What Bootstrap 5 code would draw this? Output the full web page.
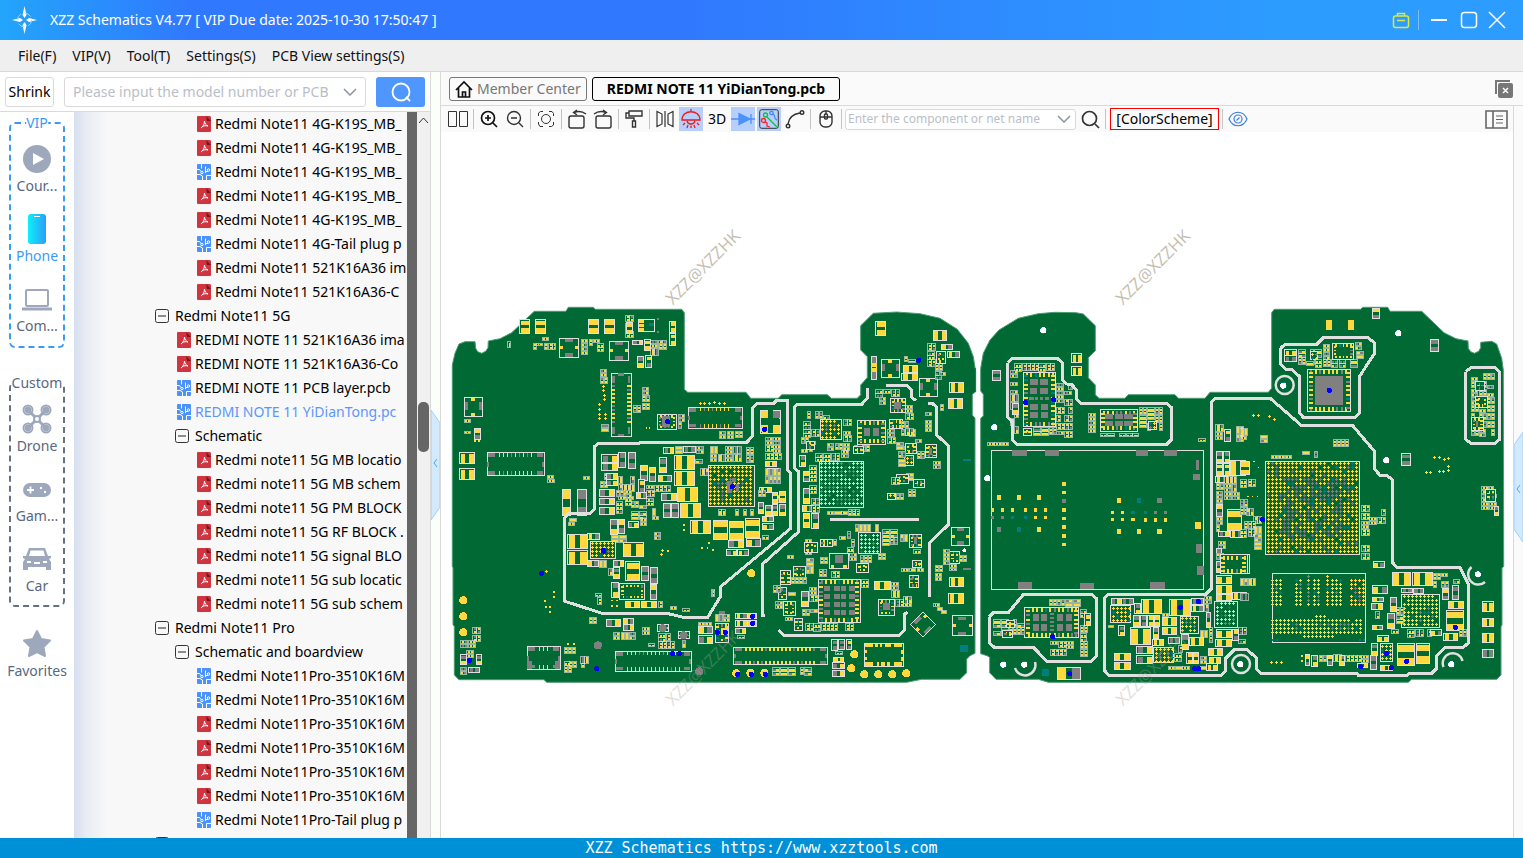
<!DOCTYPE html>
<html lang="en">
<head>
<meta charset="utf-8">
<meta name="viewport" content="width=device-width, initial-scale=1">
<title>XZZ Schematics</title>
<link href="https://cdn.jsdelivr.net/npm/bootstrap@5.3.0/dist/css/bootstrap.min.css" rel="stylesheet">
<style>
body{font-family:"Noto Sans","Open Sans",sans-serif;font-size:14px;line-height:20px;color:#111;background:#fff}
a{color:inherit;text-decoration:none}
svg{flex:none}
svg:not([fill]){fill:none}
svg:not([stroke]){stroke:currentColor}
button{background:none;border:0;padding:0;color:inherit}
.titlebar{height:40px;background:linear-gradient(90deg,#23a5fb 0,#3079fe 190px,#3079fe 45%,#2c9dff 85%,#2c9dff);color:#fff;padding:0 16px 0 12px}
.titlebar .brand-text{margin-left:13px}
.menubar{height:32px;background:#efefef;border-bottom:1px solid #d9d9d9;padding:0 18px;gap:16px}
.side{width:431px;border-right:1px solid #d9d9d9}
.searchrow{height:40px;border-bottom:1px solid #d9d9d9;padding:0 5px;gap:10px}
.btn-shrink{width:49px;height:30px;border:1px solid #d9d9d9;border-radius:3px}
.combo{border:1px solid #d9d9d9;border-radius:3px;background:#fff;min-width:0}
.combo input{border:0;outline:0;background:none;min-width:0;flex:1;padding:0;color:#333}
.combo input::placeholder{color:#b9bec9;opacity:1}
.combo button{color:#8c94a3}
.combo-model{height:30px;padding:0 8px;width:302px}
.btn-find{width:49px;height:30px;background:#4f96ff;border-radius:3px;color:#fff}
.rail{width:74px;padding:10px 9px 0;color:#596780}
.rail-group{position:relative;border:2px dashed #667085;border-radius:6px;padding-top:12px;height:225px}
.rail-group.vip{border-color:#3b9bf2;margin-bottom:34px;height:226px}
.rail-group .cap{position:absolute;top:-11px;left:50%;transform:translateX(-50%);background:#fff;line-height:20px;white-space:nowrap}
.rail-item{display:flex;flex-direction:column;align-items:center;height:70px;gap:2px;white-space:nowrap}
.rail-item svg,.favorite svg{color:#9ea8bd}
.tree{background:linear-gradient(90deg,#d5dff0 0,#e8ecf3 12px,#f8f8f8 34px);min-width:0;flex:1;overflow:hidden;padding-right:1px}
.tree a{display:flex;align-items:center;height:24px;white-space:nowrap;gap:4px;overflow:hidden;color:#000}
.tree .dir{gap:6px;padding-left:81px}
.tree .sub{padding-left:101px}
.tree .f2{padding-left:103px}
.tree .f3{padding-left:123px}
.tree a.current{color:#5c96fb}
.splitbar{width:10px;background:#666}
.scrollcol{width:13px;background:#f0f0f0;position:relative}
.thumb{position:absolute;left:1px;width:11px;top:290px;height:50px;border-radius:5px;background:#666}
.gutter{width:10px;background:#fafffa;border-right:1px solid #d9d9d9}
.tabbar{height:34px;background:#fafafa;border-bottom:1px solid #d9d9d9;padding:0 10px 0 8px;gap:5px}
.tab-btn{height:24px;border:1px solid #777;border-radius:3px;padding:0 5px;color:#777}
.tab-btn.on{border-color:#000;color:#000;font-weight:700;padding:0 14px}
.toolbar{height:26px;background:#fafafa;padding:0 5px;gap:2px;color:#333}
.tool{width:24px;height:24px;display:flex;align-items:center;justify-content:center;flex:none}
.tool.on{background:#b6cffb}
.sep{width:1px;height:20px;background:#c4c4c4;margin:0 1px;flex:none}
.combo-net{width:231px;height:21px;padding:0 4px 0 2px;font-size:12px}
.scheme{border:1px solid #f00;height:22px;width:109px;color:#000;flex:none;margin-left:1px}
.rightstrip{width:10px;background:#fafafa;border-left:1px solid #d9d9d9}
svg.board{min-height:0;flex:1;width:100%;stroke:none}
.statusbar{height:20px;background:#0090d8;color:#fff;font:15px/20px "DejaVu Sans Mono",monospace}
</style>
</head>
<body class="d-flex flex-column vh-100 overflow-hidden">
<svg width="0" height="0" class="position-absolute">
 <symbol id="pdf" viewBox="0 0 14 16"><path d="M1 0h8l5 5v10a1 1 0 0 1-1 1H1a1 1 0 0 1-1-1V1a1 1 0 0 1 1-1z" fill="#d0343f" stroke="none"/><path d="M9 0h4l1 1v4h-4z" fill="#d0343f" stroke="none"/><path d="M9 0l5 5h-4z" fill="#7c141c" stroke="none"/><path d="M4 12c2-1 3.500-4 3.500-7 .3 3 2 4.500 3.500 5M5 10.500c2-.8 4-1 6-.6" stroke="#fff"/></symbol>
 <symbol id="pcb" viewBox="0 0 14 16"><rect width="14" height="16" rx="1" fill="#4b92fb" stroke="none"/><path d="M4.500 0v4.500M0 5.500h2.500l1.500 2M8.500 9V2.500M8.500 7.500H11M0 10.500h3l2.500 1.500V16M9.500 16v-4.500H14" stroke="#fff"/><g fill="#4b92fb" stroke="#fff"><circle cx="5" cy="8.500" r="1.200"/><circle cx="11.500" cy="6" r="1.200"/></g></symbol>
 <symbol id="minus" viewBox="0 0 14 14"><rect x=".5" y=".5" width="13" height="13" rx="2" stroke="#333"/><path d="M3 7h8" stroke="#222"/></symbol>
 <symbol id="chev" viewBox="0 0 14 8"><path d="M1 1l6 6 6-6" stroke-width="1.500"/></symbol>
</svg>

<header class="titlebar d-flex align-items-center flex-shrink-0">
 <svg width="25" height="28" viewBox="0 0 25 28" stroke="none" fill="#fff"><path d="M12.500 0l2 9-2 3-2-3zM12.500 28l2-9-2-3-2 3zM0 14l8-2 3 2-3 2zM25 14l-8-2-3 2 3 2z"/><circle cx="12.500" cy="14" r="7" fill="none" stroke="#9fd4ff" stroke-width="1" stroke-dasharray="7 4"/></svg>
 <span class="brand-text">XZZ Schematics V4.77 [ VIP Due date: 2025-10-30 17:50:47 ]</span>
 <div class="ms-auto d-flex align-items-center">
  <button aria-label="Toolbox" class="d-flex me-2"><svg width="18" height="18" viewBox="0 0 18 18" color="#d9e84a" stroke-width="1.500"><rect x="1.500" y="5" width="15" height="11.500" rx="2"/><path d="M5.500 5V2.500h7V5M5 9.500h8"/></svg></button>
  <span style="width:1px;height:20px;background:#7dbdff"></span>
  <button aria-label="Minimize" class="d-flex ms-2"><svg width="24" height="20" viewBox="0 0 24 20" stroke-width="2"><path d="M4 10h16"/></svg></button>
  <button aria-label="Maximize" class="d-flex ms-2"><svg width="20" height="20" viewBox="0 0 20 20" stroke-width="1.500"><rect x="2.500" y="2.500" width="15" height="15" rx="3"/></svg></button>
  <button aria-label="Close" class="d-flex ms-2"><svg width="20" height="20" viewBox="0 0 20 20" stroke-width="1.500"><path d="M2 2l16 16M18 2L2 18"/></svg></button>
 </div>
</header>
<nav class="menubar d-flex align-items-center flex-shrink-0">
 <a href="#">File(F)</a><a href="#">VIP(V)</a><a href="#">Tool(T)</a><a href="#">Settings(S)</a><a href="#">PCB View settings(S)</a>
</nav>

<main class="d-flex flex-grow-1 overflow-hidden">
 <aside class="side d-flex flex-column flex-shrink-0">
  <div class="searchrow d-flex align-items-center flex-shrink-0">
   <button class="btn-shrink text-black">Shrink</button>
   <div class="combo combo-model d-flex align-items-center"><input type="text" aria-label="Model number" placeholder="Please input the model number or PCB"><button aria-label="Show models" class="d-flex ms-1"><svg width="14" height="8"><use href="#chev"/></svg></button></div>
   <button class="btn-find d-flex align-items-center justify-content-center" aria-label="Search"><svg width="20" height="20" viewBox="0 0 20 20" stroke-width="1.800"><circle cx="10" cy="10" r="8.500"/><path d="M15 15l4 4"/></svg></button>
  </div>
  <div class="d-flex flex-grow-1 overflow-hidden">
   <nav class="rail flex-shrink-0">
    <div class="rail-group vip"><span class="cap" style="color:#3b9bf2">VIP</span>
     <a href="#" class="rail-item pt-2"><svg width="30" height="30" viewBox="0 0 30 30" stroke="none"><circle cx="15" cy="15" r="14" fill="#9ea8bd"/><path d="M11 9l11 6-11 6z" fill="#fff"/></svg>Cour...</a>
     <a href="#" class="rail-item pt-2" style="color:#3b9bf2"><svg width="30" height="30" viewBox="0 0 30 30" stroke="none"><defs><linearGradient id="ph"><stop stop-color="#0bf0fb"/><stop offset="1" stop-color="#2e9cf8"/></linearGradient></defs><rect x="6" y="0" width="18" height="30" rx="3" fill="url(#ph)"/><path d="M12 2h6v1h-6z" fill="#fff"/></svg>Phone</a>
     <a href="#" class="rail-item pt-2"><svg width="30" height="30" viewBox="0 0 30 30" stroke-width="2"><rect x="4" y="6" width="22" height="16" rx="1"/><path d="M0 25h30" stroke-width="3"/></svg>Com...</a>
    </div>
    <div class="rail-group"><span class="cap">Custom</span>
     <a href="#" class="rail-item pt-2"><svg width="30" height="30" viewBox="0 0 30 30"><path d="M6 6l18 18M24 6L6 24" stroke-width="3"/><g fill="#9ea8bd"><circle cx="6" cy="6" r="3"/><circle cx="24" cy="6" r="3"/><circle cx="6" cy="24" r="3"/><circle cx="24" cy="24" r="3"/></g><g stroke-width="2"><circle cx="6" cy="6" r="4.500"/><circle cx="24" cy="6" r="4.500"/><circle cx="6" cy="24" r="4.500"/><circle cx="24" cy="24" r="4.500"/><circle cx="15" cy="15" r="3" fill="#fff"/></g></svg>Drone</a>
     <a href="#" class="rail-item pt-2"><svg width="30" height="30" viewBox="0 0 30 30" stroke="none"><rect x="1" y="9" width="28" height="14" rx="7" fill="#9ea8bd"/><path d="M5 16h7M8.500 12.500v7" stroke="#fff" stroke-width="1.800"/><circle cx="19" cy="14" r="1.200" fill="#fff"/><circle cx="23" cy="18" r="1.200" fill="#fff"/></svg>Gam...</a>
     <a href="#" class="rail-item pt-2"><svg width="30" height="30" viewBox="0 0 30 30" stroke="none" fill="#9ea8bd"><path d="M7 4h16l3 8h3v2l-2 1 2 3v8h-5v-3H6v3H1v-8l2-3-2-1v-2h3zM8.500 6.500L7 12h16l-1.500-5.500z" fill-rule="evenodd"/><path d="M5 17h4v2H5zM12 18h6v2h-6zM21 17h4v2h-4z" fill="#fff"/></svg>Car</a>
    </div>
   <a href="#" class="favorite d-flex flex-column align-items-center text-nowrap" style="margin-top:22px"><svg width="30" height="30" viewBox="0 0 30 30" fill="#9ea8bd" stroke-width="2" stroke-linejoin="round"><path d="M15 2l4 8 9 1.500-6.500 6.500 1.500 9-8-4-8 4 1.500-9L2 11.500l9-1.500z"/></svg><span style="margin-top:2px">Favorites</span></a>
   </nav>
   <div class="tree" id="tree">
    <a href="#" class="f3"><svg width="14" height="16"><use href="#pdf"/></svg>Redmi Note11 4G-K19S_MB_</a>
    <a href="#" class="f3"><svg width="14" height="16"><use href="#pdf"/></svg>Redmi Note11 4G-K19S_MB_</a>
    <a href="#" class="f3"><svg width="14" height="16"><use href="#pcb"/></svg>Redmi Note11 4G-K19S_MB_</a>
    <a href="#" class="f3"><svg width="14" height="16"><use href="#pdf"/></svg>Redmi Note11 4G-K19S_MB_</a>
    <a href="#" class="f3"><svg width="14" height="16"><use href="#pdf"/></svg>Redmi Note11 4G-K19S_MB_</a>
    <a href="#" class="f3"><svg width="14" height="16"><use href="#pcb"/></svg>Redmi Note11 4G-Tail plug p</a>
    <a href="#" class="f3"><svg width="14" height="16"><use href="#pdf"/></svg>Redmi Note11 521K16A36 im</a>
    <a href="#" class="f3"><svg width="14" height="16"><use href="#pdf"/></svg>Redmi Note11 521K16A36-C</a>
    <a href="#" class="dir"><svg width="14" height="14"><use href="#minus"/></svg>Redmi Note11 5G</a>
    <a href="#" class="f2"><svg width="14" height="16"><use href="#pdf"/></svg>REDMI NOTE 11 521K16A36 ima</a>
    <a href="#" class="f2"><svg width="14" height="16"><use href="#pdf"/></svg>REDMI NOTE 11 521K16A36-Co</a>
    <a href="#" class="f2"><svg width="14" height="16"><use href="#pcb"/></svg>REDMI NOTE 11 PCB layer.pcb</a>
    <a href="#" class="f2 current"><svg width="14" height="16"><use href="#pcb"/></svg>REDMI NOTE 11 YiDianTong.pc</a>
    <a href="#" class="dir sub"><svg width="14" height="14"><use href="#minus"/></svg>Schematic</a>
    <a href="#" class="f3"><svg width="14" height="16"><use href="#pdf"/></svg>Redmi note11 5G MB locatio</a>
    <a href="#" class="f3"><svg width="14" height="16"><use href="#pdf"/></svg>Redmi note11 5G MB schem</a>
    <a href="#" class="f3"><svg width="14" height="16"><use href="#pdf"/></svg>Redmi note11 5G PM BLOCK</a>
    <a href="#" class="f3"><svg width="14" height="16"><use href="#pdf"/></svg>Redmi note11 5G RF BLOCK .</a>
    <a href="#" class="f3"><svg width="14" height="16"><use href="#pdf"/></svg>Redmi note11 5G signal BLO</a>
    <a href="#" class="f3"><svg width="14" height="16"><use href="#pdf"/></svg>Redmi note11 5G sub locatic</a>
    <a href="#" class="f3"><svg width="14" height="16"><use href="#pdf"/></svg>Redmi note11 5G sub schem</a>
    <a href="#" class="dir"><svg width="14" height="14"><use href="#minus"/></svg>Redmi Note11 Pro</a>
    <a href="#" class="dir sub"><svg width="14" height="14"><use href="#minus"/></svg>Schematic and boardview</a>
    <a href="#" class="f3"><svg width="14" height="16"><use href="#pcb"/></svg>Redmi Note11Pro-3510K16M</a>
    <a href="#" class="f3"><svg width="14" height="16"><use href="#pcb"/></svg>Redmi Note11Pro-3510K16M</a>
    <a href="#" class="f3"><svg width="14" height="16"><use href="#pdf"/></svg>Redmi Note11Pro-3510K16M</a>
    <a href="#" class="f3"><svg width="14" height="16"><use href="#pdf"/></svg>Redmi Note11Pro-3510K16M</a>
    <a href="#" class="f3"><svg width="14" height="16"><use href="#pdf"/></svg>Redmi Note11Pro-3510K16M</a>
    <a href="#" class="f3"><svg width="14" height="16"><use href="#pdf"/></svg>Redmi Note11Pro-3510K16M</a>
    <a href="#" class="f3"><svg width="14" height="16"><use href="#pcb"/></svg>Redmi Note11Pro-Tail plug p</a>
    <a href="#" class="dir" aria-label="Next folder"><svg width="14" height="14"><use href="#minus"/></svg></a>
   </div>
   <div class="splitbar"></div>
   <div class="scrollcol"><svg width="13" height="18" viewBox="0 0 13 18" class="d-block" color="#333"><path d="M2 11l4.500-5 4.500 5"/></svg><span class="thumb"></span></div>
  </div>
 </aside>
 <div class="gutter flex-shrink-0 d-flex align-items-center"><svg width="9" height="110" viewBox="0 0 9 110" style="margin-top:20px"><path d="M0 0l9 13v84l-9 13z" fill="#d3e9fd" stroke="#9fd0fb"/><path d="M6 49l-3 4 3 4" stroke="#4ba4f5"/></svg></div>

 <section class="d-flex flex-column flex-grow-1 overflow-hidden">
  <div class="tabbar d-flex align-items-center flex-shrink-0">
   <button class="tab-btn d-flex align-items-center gap-1"><svg width="18" height="18" viewBox="0 0 18 18" color="#111" stroke-width="1.700"><path d="M1 10l8-8 8 8M3.500 8v9h11V8M7.500 17v-5h3v5"/></svg>Member Center</button>
   <button class="tab-btn on">REDMI NOTE 11 YiDianTong.pcb</button>
   <button class="ms-auto d-flex" aria-label="Close all"><svg width="19" height="19" viewBox="0 0 19 19" color="#777" stroke-width="2"><path d="M2 15V2h14"/><rect x="5" y="5" width="13" height="13" rx="1" fill="#777"/><path d="M9 9l5 5M14 9l-5 5" stroke="#fff" stroke-width="1.500"/></svg></button>
  </div>
  <div class="d-flex flex-grow-1 overflow-hidden">
   <div class="d-flex flex-column flex-grow-1 overflow-hidden">
    <div class="toolbar d-flex align-items-center flex-shrink-0">
     <button class="tool" aria-label="Split view"><svg width="20" height="18" viewBox="0 0 20 18"><path d="M.5 1.500h8v15h-8zM11.500 1.500h8v15h-8z"/></svg></button><i class="sep"></i>
     <button class="tool" aria-label="Zoom in"><svg width="18" height="18" viewBox="0 0 18 18" color="#111" stroke-width="1.700"><circle cx="8" cy="8" r="6.500"/><path d="M13 13l4 4M5 8h6M8 5v6"/></svg></button>
     <button class="tool" aria-label="Zoom out"><svg width="18" height="18" viewBox="0 0 18 18" stroke-width="1.400"><circle cx="8" cy="8" r="6.500"/><path d="M13 13l4 4M5 8h6"/></svg></button><i class="sep"></i>
     <button class="tool" aria-label="Fit"><svg width="18" height="18" viewBox="0 0 18 18"><path d="M1.500 6V3l2-1.500H6M12 1.500h3l1.500 2V6M16.500 12v3l-2 1.500H12M6 16.500H3L1.500 14v-2"/><circle cx="9" cy="9" r="4.500"/></svg></button><i class="sep"></i>
     <button class="tool" aria-label="Rotate left"><svg width="20" height="20" viewBox="0 0 20 20" stroke-width="1.400"><rect x="2" y="7" width="15" height="12" rx="2"/><path d="M19 5C15 2 11 2 7 3.500M10 1L6.500 3.500 10 6"/></svg></button>
     <button class="tool" aria-label="Rotate right"><svg width="20" height="20" viewBox="0 0 20 20" stroke-width="1.400"><rect x="3" y="7" width="15" height="12" rx="2"/><path d="M1 5c4-3 8-3 12-1.500M10 1l3.500 2.500L10 6"/></svg></button><i class="sep"></i>
     <button class="tool" aria-label="Paint"><svg width="18" height="18" viewBox="0 0 18 18" stroke-width="1.400"><path d="M4 1h13v5H4zM4 3H1v5h8v3M7.500 11h3v6h-3z"/></svg></button><i class="sep"></i>
     <button class="tool" aria-label="Mirror"><svg width="20" height="18" viewBox="0 0 20 18" stroke-width="1.200"><path d="M10 1v16M7 4v10l-5 2.500v-15zM13 4v10l5 2.500v-15z"/></svg></button>
     <button class="tool on" aria-label="Lamp"><svg width="20" height="20" viewBox="0 0 20 20" color="#f01818" stroke-width="1.300"><path d="M1 11c0-11 18-11 18 0zM10 3V0M6 12c1 4 7 4 8 0M4 14l-2 2M7 16l-1 3M10 16.500V19M13 16l1 3M16 14l2 2"/></svg></button>
     <button class="tool text-black">3D</button>
     <button class="tool on" aria-label="Diode"><svg width="24" height="14" viewBox="0 0 24 14" color="#4b92fb" stroke-width="1.300"><path d="M0 7h24M20 2v10"/><path d="M8 1.500l11 5.500-11 5.500z" fill="currentColor"/></svg></button>
     <button class="tool on" aria-label="Nets"><svg width="20" height="20" viewBox="0 0 20 20"><rect x=".7" y=".7" width="18.600" height="18.600" rx="2" stroke="#333"/><g stroke-width="1.300"><circle cx="4.500" cy="11.500" r="2" stroke="#f22"/><path d="M6 13l2 1v3l3 1" stroke="#f22"/><circle cx="6.500" cy="6" r="2" stroke="#1b4"/><path d="M8 8l10 10" stroke="#1b4"/><circle cx="12.500" cy="4" r="1.700" stroke="#48f"/><path d="M14 5c3 1 0 5 4 6" stroke="#48f"/></g></svg></button>
     <button class="tool" aria-label="Measure"><svg width="20" height="20" viewBox="0 0 20 20" stroke-width="1.400"><path d="M3 15C4 8 8 5 15 4"/><circle cx="3" cy="17" r="1.800"/><circle cx="17" cy="3.500" r="1.800"/></svg></button><i class="sep"></i>
     <button class="tool" aria-label="Mouse"><svg width="14" height="18" viewBox="0 0 14 18" stroke-width="1.400"><rect x="1" y="1" width="12" height="16" rx="5"/><path d="M1 7h12M7 1v3"/><rect x="5.500" y="4" width="3" height="5" rx="1"/></svg></button><i class="sep"></i>
     <div class="combo combo-net d-flex align-items-center"><input type="text" aria-label="Component or net name" placeholder="Enter the component or net name"><button aria-label="Show names" class="d-flex ms-1"><svg width="14" height="8"><use href="#chev"/></svg></button></div>
     <button class="tool" aria-label="Find"><svg width="19" height="19" viewBox="0 0 19 19" stroke-width="1.700"><circle cx="8.500" cy="8.500" r="7"/><path d="M14 14l4 4"/></svg></button><i class="sep"></i>
     <button class="scheme">[ColorScheme]</button><i class="sep"></i>
     <button class="tool" aria-label="Visibility"><svg width="20" height="16" viewBox="0 0 20 16" color="#3d7fe0" stroke-width="1.200"><path d="M1 8c4-9 14-9 18 0-4 9-14 9-18 0z"/><circle cx="10" cy="8" r="4"/><path d="M8.500 9.500l3-3"/></svg></button>
     <button class="ms-auto d-flex" aria-label="Side panel"><svg width="23" height="19" viewBox="0 0 23 19" color="#666"><path d="M1 1h21v17H1zM8 1v17" stroke-width="1.600"/><path d="M11 6h7M11 9.500h7M11 13h7"/></svg></button>
    </div>
    <svg class="board" id="board" viewBox="441 132 1072 706" shape-rendering="crispEdges" role="img" aria-label="Board view"></svg>
   </div>
   <div class="rightstrip flex-shrink-0 d-flex align-items-center"><svg width="9" height="110" viewBox="0 0 9 110" style="margin-top:30px"><path d="M9 0L0 13v84l9 13z" fill="#d3e9fd" stroke="#9fd0fb"/><path d="M6 53l-3 4 3 4" stroke="#4ba4f5"/></svg></div>
  </div>
 </section>
</main>
<footer class="statusbar text-center flex-shrink-0">XZZ Schematics https://www.xzztools.com</footer>

<script src="https://cdn.jsdelivr.net/npm/bootstrap@5.3.0/dist/js/bootstrap.bundle.min.js"></script>
<script>
// Board sheets: each sheet has an origin; part coordinates are thirds of a board unit.
const SHEET={A:[445,300],B:[710,300],C:[445,490],D:[710,490],E:[975,300],F:[1240,300]};
const GREEN='#006934',Y='#ffd83d',G='#808080',W='#e0e0e0',T='#007f80';
let seed=11;const rnd=()=>(seed=(seed*16807)%2147483647)/2147483647;
const path=s=>{let o=[0,0],out=[];s.trim().split(/\s+/).forEach(t=>{if(SHEET[t])o=SHEET[t];else{const [x,y]=t.split(',').map(Number);out.push((o[0]+x/3).toFixed(1)+','+(o[1]+y/3).toFixed(1))}});return out.join(' ')};
const rect=(x,y,w,h,c)=>`<rect x="${x}" y="${y}" width="${w}" height="${h}" fill="${c}"/>`;
const box=(x,y,w,h,s=3)=>`<rect x="${x}" y="${y}" width="${w}" height="${h}" fill="${GREEN}" stroke="${W}" stroke-width="${s}"/>`;
const dot=(x,y,r,c)=>`<circle cx="${x}" cy="${y}" r="${r}" fill="${c}"/>`;
function part(x,y,w,h,p,q){ // two-pad part
 const s=w<26&&h<26?2:3;let r=box(x,y,w,h,s);const m=2;
 if(w>=h){const k=Math.round(w*.33);return r+rect(x+m,y+m,k,h-2*m,p)+rect(x+w-m-k,y+m,k,h-2*m,q)}
 const k=Math.round(h*.33);return r+rect(x+m,y+m,w-2*m,k,p)+rect(x+m,y+h-m-k,w-2*m,k,q)}
const pick=()=>rnd()<.25?G:Y;
function cluster(x,y,w,h){let r='';for(let j=y;j+20<=y+h+4;j+=24)for(let i=x;i+18<=x+w+4;i+=24){
 if(rnd()<.08)continue;const v=rnd()<.5;
 for(let n=0;n<2;n++){if(rnd()<.13)continue;r+=v?part(i+n*12,j,10,20,pick(),pick()):part(i,j+n*12,20,10,pick(),pick())}}return r}
function chip(x,y,w,h,sides){let r=box(x,y,w,h);const big=Math.min(w,h)>55,l=big?12:8,t=big?6:5,p=big?13:11;
 const c=()=>rnd()<.1?T:rnd()<.25?G:Y;
 if(sides!=='h')for(let i=x+8;i<x+w-8;i+=p)r+=rect(i,y+3,t,l,c())+rect(i,y+h-3-l,t,l,c());
 if(sides!=='v')for(let j=y+8;j<y+h-8;j+=p)r+=rect(x+3,j,l,t,c())+rect(x+w-3-l,j,l,t,c());return r}
function connector(x,y,w,h){let r=box(x,y,w,h);const l=Math.min(w,h)*.16;
 if(w>h){for(let i=x+34;i<x+w-36;i+=12)r+=rect(i,y+2,4,l,pick())+rect(i,y+h-2-l,4,l,pick());
  r+=rect(x+3,y+3,20,l,G)+rect(x+w-23,y+3,20,l,G)+rect(x+3,y+h-3-l,20,l,G)+rect(x+w-23,y+h-3-l,20,l,G)+rect(x,y+h*.4,6,h*.22,G)+rect(x+w-6,y+h*.4,6,h*.22,G)}
 else{for(let j=y+36;j<y+h-34;j+=12)r+=rect(x+2,j,l,4,pick())+rect(x+w-2-l,j,l,4,pick());
  r+=rect(x+3,y+8,8,22,G)+rect(x+w-11,y+8,8,22,G)+rect(x+3,y+h-28,8,22,G)+rect(x+w-11,y+h-28,8,22,G)+rect(x+w*.35,y,16,7,G)+rect(x+w*.35,y+h-7,16,7,G)}return r}
const plus=(x,y)=>`M${x-3} ${y}h9v3h-9zM${x} ${y-3}h3v9h-3z`;
const snap=v=>Math.round(v/3)*3;
function balls(x,y,w,h,gray){let p={[Y]:'',[G]:'',[T]:''};const cx=x+w/2,cy=y+h/2;
 for(let j=snap(y+5);j<y+h-3;j+=12)for(let i=snap(x+5);i<x+w-3;i+=12){if(rnd()<.04)continue;
  const d=Math.max(Math.abs(i-cx)/w,Math.abs(j-cy)/h)*2,k=rnd();
  const c=k<.06?T:k<(d<.65?gray:gray*.25)?G:Y;p[c]+=plus(i,j)}
 return Object.keys(p).map(c=>`<path d="${p[c]}" fill="${c}"/>`).join('')}
const draw={
 a:(x,y,w,h)=>part(x,y,w,h,Y,Y), b:(x,y,w,h)=>part(x,y,w,h,Y,G), c:(x,y,w,h)=>part(x,y,w,h,G,Y), g:(x,y,w,h)=>part(x,y,w,h,G,G),
 Y:(x,y,w,h)=>rect(x,y,w,h,Y), G:(x,y,w,h)=>rect(x,y,w,h,G), T:(x,y,w,h)=>rect(x,y,w,h,T), V:(x,y,w,h)=>rect(x,y,w,h,GREEN),
 o:(x,y,w,h)=>box(x,y,w,h), k:cluster, i:chip, h:(x,y,w,h)=>chip(x,y,w,h,'h'), v:(x,y,w,h)=>chip(x,y,w,h,'v'), n:connector,
 m:(x,y,w,h)=>box(x,y,w,h)+balls(x,y,w,h,.25), M:(x,y,w,h)=>box(x,y,w,h)+balls(x,y,w,h,.6), p:(x,y,w,h)=>balls(x,y,w,h,.3),
 d:(x,y)=>dot(x,y,8,'#00f'), y:(x,y)=>dot(x,y,12,Y), q:(x,y)=>dot(x,y,12,G), w:(x,y)=>dot(x,y,10,T)+dot(x,y,9,'#fff'), z:(x,y)=>dot(x,y,6,'#fff'),
 x:(x,y)=>`<path d="${plus(snap(x-2),snap(y-2))}" fill="${Y}"/>`,
 S:(x,y,w,h)=>box(x,y,w,h)+rect(x+w*.3,y+2,w*.4,10,G)+rect(x+w*.3,y+h-12,w*.4,10,G)+rect(x+2,y+h*.42,8,8,Y)+rect(x+w-10,y+h*.42,8,8,Y),
 R:(x,y,w,h)=>box(x,y,w,h)+rect(x+2,y+h*.25,10,h*.4,G)+rect(x+w-12,y+h*.25,10,h*.4,G)+rect(x+w*.38,y+2,10,8,Y)+rect(x+w*.38,y+h-10,10,8,Y),
 D:(x,y)=>`<g transform="rotate(45 ${x} ${y})">${box(x-27,y-27,54,54)+rect(x-26,y-10,10,24,G)+rect(x+16,y-10,10,24,G)+rect(x-6,y+16,10,9,Y)+rect(x-18,y-26,10,9,Y)}</g>`};
const parts={
A:`a 225,60,28,40 a 271,60,31,40 a 430,58,31,42 a 478,58,31,42 S 343,115,57,57 S 493,124,57,57 R 58,292,55,57 n 499,220,60,189 n 127,457,171,70 n 730,322,110,63
 a 189,126,8,17 a 292,112,18,10 a 265,130,10,18 a 276,130,16,8 a 298,130,10,20 a 312,130,10,20 a 324,130,8,18 k 409,118,22,62 a 433,118,10,18 a 446,118,18,10 k 457,132,32,62 k 529,46,12,70 k 543,46,22,70 a 545,68,18,34 o 580,58,48,36 Y 582,60,14,8 Y 582,72,14,8 Y 582,84,14,8 T 612,69,14,10 G 636,54,6,6 G 636,93,6,6
 a 675,64,18,34 a 675,102,18,34 k 661,64,10,60 c 562,121,32,14 a 598,120,18,32 k 618,122,44,40 k 592,152,40,12 c 577,170,20,32 b 603,168,17,34 k 644,130,22,34 k 672,136,20,12 k 466,208,22,42 k 558,144,10,44 k 550,192,24,8
 x 475,260 x 475,271 x 478,287 x 478,298 x 463,314 x 463,329 x 463,343 x 463,356 x 481,343 x 481,356 k 592,228,10,22 k 592,262,20,74 k 565,318,18,60 k 590,374,8,20 k 455,384,12,30 k 470,374,18,30 Y 603,382,4,4 Y 612,382,4,4
 i 638,343,56,45 G 652,347,24,34 d 668,365 k 633,327,62,10 k 646,394,50,10 k 700,343,22,54 k 622,358,10,20 x 766,310 x 780,310 x 795,310
 a 58,358,18,10 k 66,362,10,42 a 58,394,18,8 b 88,386,18,32 Y 87,420,5,5 Y 100,420,5,5 a 45,459,43,31 a 45,507,43,31 a 307,526,20,9 a 309,539,20,9 a 415,529,19,9
 c 471,465,46,22 c 471,491,46,22 k 470,449,64,10 g 522,458,19,44 g 551,458,20,48 b 586,496,22,46 b 613,502,20,42 c 643,474,21,44 c 657,442,30,18 k 692,440,24,20 g 717,440,34,18 k 756,440,30,20 a 690,466,58,42 a 690,514,58,42 k 752,480,30,24 k 768,506,22,34 k 466,520,14,44 c 484,520,34,18 c 484,540,34,18 k 522,530,60,64 k 534,508,30,14 b 582,540,18,40 b 640,526,40,20 k 606,556,74,34 a 352,568,26,80 g 398,568,26,80 k 768,558,22,20`,
C:`c 464,-2,46,21 c 464,25,46,20 c 464,52,46,22 k 514,0,26,90 k 541,0,28,45 b 574,8,32,18 k 606,0,36,50 c 650,10,44,22 a 698,-8,60,42 g 656,40,20,44 g 679,40,22,44 a 706,40,60,42 a 738,91,58,40 k 560,34,44,18 k 560,66,46,26 c 496,88,22,46 b 520,88,20,44 c 550,96,30,18 k 586,86,24,50 k 622,56,24,50 k 628,128,34,18 k 550,118,58,14 k 500,136,74,18 a 374,86,20,9 a 370,97,20,9
 a 369,133,58,42 a 369,183,58,42 b 429,130,34,19 b 427,211,34,19 m 437,154,74,52 d 476,183 a 535,159,60,42 c 505,211,32,18 k 464,212,34,22 a 543,216,41,56 g 590,229,20,44 g 616,233,22,48 k 492,236,20,18 c 505,234,18,32 k 526,234,10,40 i 525,281,73,47 c 501,278,19,44 b 616,284,20,44 k 604,282,10,46 a 541,334,44,20 a 590,334,46,20 a 642,334,10,18 a 451,312,18,9 a 459,324,10,20 Y 498,329,5,5 Y 514,329,5,5 Y 498,345,5,5 Y 514,345,5,5
 x 652,181 x 649,193 Y 666,181,5,5 Y 714,102,5,5 Y 714,117,5,5 Y 789,157,5,5 Y 768,172,5,5 Y 785,172,5,5 Y 800,178,5,5 x 304,244 Y 281,245,8,4 d 290,250 Y 324,304,5,5 Y 324,318,5,5 Y 297,330,5,5 Y 300,348,5,5 Y 312,348,5,5 Y 312,363,5,5 y 55,331 y 55,379 y 55,427
 k 84,412,20,56 k 48,452,60,38 c 46,495,18,30 c 95,495,16,30 k 66,482,26,18 d 74,511 k 46,532,26,18 g 72,532,32,15 n 247,469,99,69 G 247,514,14,22 G 330,514,14,22 a 358,472,10,18 a 370,472,10,18 a 382,472,10,18 Y 366,460,5,5 Y 385,460,5,5 k 358,504,14,46 k 374,514,52,34 k 408,500,18,20 q 459,466 d 455,536
 a 433,382,10,18 a 445,382,10,18 c 485,388,42,22 b 535,386,32,18 c 535,404,32,18 k 505,428,74,18 k 594,412,26,34 k 622,406,14,20 i 638,404,34,22 q 653,415 k 672,396,12,30 i 700,426,34,20 q 716,436 k 704,396,28,24 k 642,432,54,40 k 700,452,48,20 a 760,397,18,9 a 782,397,18,9 b 760,410,44,22 c 760,438,44,22 a 610,462,18,8
 n 511,484,228,60 d 683,491 d 703,491 q 763,544 a 676,349,18,9 a 714,357,20,9 a 800,300,10,20`,
B:`a 498,64,28,42 a 670,91,40,31 n -65,322,162,63 x 14,308 x 28,310 x 43,310 k 28,394,66,18 a 153,331,58,70 Y 154,333,20,20 G 189,333,20,20 Y 154,376,20,20 Y 189,377,22,22 V 174,331,14,68 V 156,354,52,21 d 164,388 k 140,330,8,106 k 168,412,48,70 k 0,440,96,40 k 110,444,32,40 a 166,484,33,17 c 172,506,34,18 k 148,506,18,12 k 166,506,56,56 a 150,562,34,16 k 188,562,36,40
 m -6,497,140,122 G 50,543,15,36 G 65,535,12,12 G 77,551,9,24 d 67,560 g 484,170,16,70 Y 484,188,16,12 Y 484,205,16,12 R 514,178,55,55 R 628,235,55,55 a 580,196,44,22 a 576,220,46,21 k 514,152,70,12 a 583,170,10,16 a 596,180,20,8 d 626,181 k 654,132,32,64 i 680,155,26,36 b 694,133,34,16 b 714,154,34,18 k 712,172,20,12 k 628,200,34,20 k 676,192,26,44 k 688,218,22,20 a 720,247,41,31 a 715,295,43,31 a 691,313,10,18
 k 498,270,92,26 i 543,295,44,44 G 553,306,20,22 k 508,292,32,22 k 588,316,24,44 k 496,340,24,12 i 442,361,86,72 G 462,384,18,24 G 490,384,18,24 k 292,336,66,16 k 366,342,42,12 k 282,366,44,44 m 331,358,64,62 k 402,358,36,76 i 538,358,40,28 k 534,388,34,44 k 574,364,38,42 k 560,404,56,50 k 622,324,24,12 k 646,326,20,84 k 588,386,26,30 i 587,430,34,32 i 646,434,34,40 G 657,443,8,22
 k 274,412,48,62 i 290,424,24,26 k 352,430,76,22 k 434,436,52,18 i 432,440,30,22 k 318,462,74,24 k 396,452,36,24 c 270,466,18,34 b 280,514,18,32 k 300,486,22,110 M 329,485,132,137 m 585,468,26,28 k 566,454,36,40 k 622,456,24,30 k 672,484,18,22 k 686,446,10,18 k 590,496,34,48 i 560,524,36,26 i 612,540,32,22 k 546,534,18,36 k 596,570,24,30 T 760,477,24,6 k 616,406,24,20`,
D:`k 146,0,36,26 c 146,38,16,32 c 166,46,18,30 a 188,6,16,34 c 187,45,16,32 a 209,4,18,34 c 209,44,18,34 a 24,60,10,18 a 36,60,10,18 a 76,60,10,18 a 100,60,10,18 a 122,60,10,18 a 10,91,42,58 a 58,94,42,56 a 106,87,42,56 c 56,152,46,22 b 110,147,42,22 b 158,80,32,16 b 158,102,32,16 k 194,84,18,30 c 49,180,32,18 b 84,180,32,18 a 158,138,18,10 Y 6,177,6,6
 c 280,-5,20,47 b 278,46,32,20 a 280,70,18,42 c 306,70,20,46 k 306,0,18,64 a 352,64,20,10 a 374,64,20,10 a 396,64,18,10 a 416,60,9,16 a 427,60,9,16 a 438,60,10,16 y 124,250 m 447,129,66,62 k 436,104,82,18 k 412,126,30,68 k 518,120,44,60 a 390,140,18,9 k 286,148,34,44 i 284,158,38,30 i 331,148,36,22 a 370,150,10,18 k 332,178,28,46 o 360,192,56,45 G 375,196,24,24 Y 362,225,10,8 Y 400,225,10,8 i 441,221,34,26 k 420,190,14,44 k 440,198,40,16 k 482,190,38,28 k 232,174,30,12 k 232,196,28,18 k 202,226,40,10 i 250,230,36,32 i 211,243,32,40 k 244,262,56,22 k 290,206,30,58 i 205,292,26,36 k 190,288,16,20 k 236,296,34,38 c 274,304,21,46 i 222,334,34,42 k 198,334,22,18 i 253,385,26,36 a 228,382,20,9 k 278,358,44,36 k 300,292,18,60 k 366,244,36,18 k 328,240,28,24 k 388,250,78,14 k 456,270,24,18 k 458,294,12,58
 i 325,268,126,130 ${[342,372,392,417].map(x=>[288,312,336,360].map(y=>`G ${x},${y},17,15`).join(' ')).join(' ')} k 288,402,150,18 a 493,274,48,25 k 546,278,16,42 i 506,328,48,48 G 519,339,20,22 k 492,312,12,62 k 558,330,42,24 k 516,380,26,10 k 582,320,18,20 i 598,256,28,38 k 630,262,10,38 a 576,236,20,8 a 600,236,18,8 a 622,236,18,8 i 607,212,28,20 k 612,180,24,32 i 599,133,36,40 G 611,141,10,22 k 572,134,24,22 k 638,138,8,34 k 604,0,10,28 m 534,10,24,20 k 560,10,28,30
 k 740,80,34,16 S 724,112,55,54 i 720,184,28,36 k 700,178,18,50 k 748,196,22,24 k 676,226,18,42 a 720,224,20,8 a 720,235,20,8 z 763,181 G 760,234,24,6 a 720,262,41,28 a 717,310,43,31 D 639,404 a 672,340,16,9 a 682,352,16,9 a 694,362,16,9 S 727,378,60,59 T 750,465,24,20
 b 78,370,34,16 a 78,391,34,18 a 112,370,28,16 a 112,391,28,18 d 128,379 d 128,400 G 28,362,17,15 k 16,374,52,18 i 15,400,42,57 G 14,420,16,14 Y 34,414,20,22 d 22,427 d 46,427 c 76,416,32,16 k 0,410,10,50 a 84,438,20,8 k 154,444,54,14 a 6,302,8,18 n 72,472,280,52
 g 366,450,16,32 g 387,450,16,30 b 411,450,14,28 a 378,486,20,8 a 370,502,32,14 c 368,519,36,18 c 368,541,36,18 k 332,534,26,32 k 354,504,12,60 o 463,460,117,69 Y 466,462,22,10 Y 496,462,8,8 Y 510,462,6,8 Y 524,462,20,8 Y 552,462,24,10 Y 466,517,22,10 Y 500,517,6,10 Y 514,517,12,10 Y 532,517,8,10 Y 552,517,24,10 Y 464,480,8,10 Y 464,500,8,10 Y 572,480,6,12 Y 572,500,6,12 y 433,493 y 424,535 y 463,553 y 505,553 y 547,553 y 589,550 y 79,550 y 121,549 y 163,549 d 83,553 d 124,553 d 166,553 k 188,534,110,22`,
E:`w 205,91 w 58,382 w 37,535 w 85,1094 w 148,1094 a 291,162,29,26 a 291,201,29,26 g 53,211,23,31 T 202,1107,20,20 T 0,205,2,70
 k 120,192,124,18 k 108,212,36,192 c 112,310,20,34 k 246,250,42,160 i 145,217,97,163 G 165,237,24,18 G 195,237,24,18 G 165,264,20,18 G 195,264,24,18 G 165,312,24,18 G 198,312,20,18 G 165,336,24,18 G 198,336,20,18 G 162,291,60,9 V 176,291,5,9 V 190,291,5,9 V 204,291,5,9 d 152,308 d 236,299 k 176,384,68,26 i 145,386,26,20 k 342,328,30,84 i 376,330,112,64 G 390,342,24,15 G 420,342,24,15 G 447,342,26,15 G 390,363,24,15 G 420,363,24,15 G 447,363,26,15 a 376,402,18,9 a 398,402,20,9 a 434,402,18,9 a 454,402,18,9 a 474,402,18,9 k 494,324,66,84 m 520,365,26,24 a 672,417,19,8 a 39,427,20,9 a 60,427,20,9 a 82,427,18,9
 o 49,451,637,417 G 111,450,45,18 G 210,450,42,18 G 483,450,36,18 G 567,450,39,18 G 662,480,10,30 G 654,522,21,18 Y 660,666,18,21 G 663,732,18,27 G 666,798,20,27 G 129,846,42,21 G 315,849,42,18 G 525,846,45,21
 Y 66,585,12,15 Y 126,585,12,15 Y 186,585,12,15 Y 48,624,9,12 Y 78,624,9,12 Y 108,624,9,12 Y 147,624,9,12 Y 177,624,9,12 Y 207,624,9,12 G 48,648,9,9 G 78,648,9,9 T 108,648,9,9 T 147,648,9,9 Y 177,648,9,9 Y 207,648,9,9 G 66,681,12,15 T 126,681,12,15 Y 186,681,12,15
 Y 261,546,12,12 Y 261,573,12,9 G 261,597,12,12 Y 261,624,12,12 Y 261,651,12,9 Y 261,675,12,12 Y 261,702,12,12 Y 261,729,12,9 Y 426,594,12,15 T 486,594,12,15 G 546,594,15,15 Y 408,633,9,9 Y 438,633,9,9 T 468,633,12,9 T 507,633,9,9 G 537,633,9,9 G 567,633,9,9 Y 408,654,9,9 Y 438,654,9,9 Y 468,654,12,9 Y 508,654,9,12 Y 537,654,9,12 Y 567,654,9,12 Y 426,687,12,15 Y 486,687,12,15 Y 546,687,15,15
 k 152,898,162,22 k 316,906,34,160 i 150,922,162,92 G 174,942,18,21 G 198,942,18,21 G 246,942,18,21 G 273,942,18,21 G 174,972,18,21 G 198,972,18,21 G 246,972,18,21 G 273,972,18,21 G 225,938,12,56 V 225,945,12,5 V 225,957,12,5 V 225,969,12,5 V 225,981,12,5 d 233,1010 k 56,960,90,56 i 94,962,26,22 i 84,992,30,20 k 168,1020,66,10 k 228,1024,66,40 a 330,942,18,36 b 249,1102,67,36 Y 249,1102,24,34 d 284,1121 k 238,1108,10,24
 c 409,895,30,18 g 441,895,34,18 m 408,918,58,50 a 501,898,58,44 a 585,898,62,48 d 617,922 g 651,896,34,17 d 671,905 b 651,916,34,18 c 480,910,16,32 c 475,946,18,34 g 498,946,18,34 a 519,946,16,34 a 538,946,16,34 a 562,941,20,8 a 562,953,44,24 a 562,983,44,20 m 616,950,56,50 a 466,984,60,50 c 432,978,18,30 c 536,982,16,34 a 400,976,16,8 k 452,978,12,22 a 534,1018,32,18 k 568,1018,12,18 g 582,1012,32,18 c 620,1004,20,44 a 645,1012,42,24 k 676,992,34,36 k 600,1038,32,56 m 537,1042,60,46 c 486,1040,46,22 c 486,1068,46,22 a 418,1060,48,22 a 418,1088,48,22 k 408,1052,10,56 a 636,1058,16,34 a 656,1058,16,34 k 676,1070,22,26 a 700,1046,44,22 a 703,1072,34,18 a 580,1100,20,9 a 602,1100,20,9 a 624,1100,20,9 a 674,1100,20,9 a 696,1092,32,20 d 659,1106 d 671,1106
 b 723,530,34,17 c 724,455,18,34 a 724,492,18,34 c 747,455,16,34 a 747,492,16,34 k 723,374,20,42 b 750,390,16,34 a 767,482,44,44 k 724,550,22,64 k 750,530,56,80 k 770,468,36,10 k 784,380,28,44 k 744,434,10,18 b 725,614,18,36 a 757,630,42,62 k 724,652,22,40 c 732,694,32,16 b 768,692,34,20 k 732,724,36,30 c 725,746,16,34 k 724,760,16,20 c 725,784,16,34 i 748,764,75,56 d 782,794 a 725,828,44,24 a 725,856,44,24 a 725,883,44,20 b 774,878,40,22 m 720,905,68,78 c 694,938,14,44 k 690,890,14,46 a 725,990,44,22 a 723,1018,46,22 b 774,988,18,34 k 792,984,16,40 k 692,984,16,40`,
F:`b 397,25,22,31 Y 258,60,18,30 Y 324,60,18,30 w 475,100 w 130,257 w 439,481 w 714,823 w 634,1093 w 1,1093 g 572,119,24,36 g 485,462,26,34 a 135,150,34,18 g 135,168,34,18 k 176,150,70,50 k 250,134,30,40 i 278,130,64,48 k 226,180,92,20 k 332,180,20,20 k 346,128,36,20 k 350,154,20,30 m 212,156,20,22
 k 190,208,12,128 k 334,208,10,70 i 203,208,129,128 G 225,228,84,87 d 268,271 k 694,220,64,190 i 708,246,26,26 i 706,290,36,34 i 695,352,36,40 G 709,364,6,16
 x 42,346 x 55,346 x 88,349 x 103,358 x 584,472 x 598,472 x 613,478 x 625,475 x 625,499 x 625,511 x 610,514 x 598,514 x 560,517 x 572,517
 k 0,386,14,40 k 14,406,78,24 a 94,466,20,9 a 116,466,18,9 a 136,466,18,9 k 188,454,50,18 k 264,456,24,18 k 280,420,46,26 k 330,456,12,18 k 0,474,18,12 a 0,485,30,40 k 60,496,12,20 Y 40,482,4,4 Y 54,500,4,4 k 0,540,70,34 Y 22,588,4,4 Y 36,588,4,4 Y 50,588,4,4 k 0,600,18,40 k 18,626,54,42 k 0,666,46,42 k 44,680,28,82 k 0,836,60,36 g 0,880,24,22 i -60,764,82,58 k 40,814,20,10 k 0,936,12,84
 M 78,485,280,278 d 68,659 k 366,616,20,160 k 390,628,40,58 b 400,786,34,18 o 97,820,280,207 p 90,836,44,82 p 162,836,30,82 p 198,824,10,94 p 218,836,28,82 p 256,824,10,94 p 272,836,32,82 p 328,836,46,82 p 92,954,282,46 p 210,942,46,10 p 188,1002,92,10 T 95,1018,6,6 T 107,1018,6,6 T 357,1018,6,6 T 370,1018,6,6 x 94,1087 x 109,1087 x 124,1087 k 68,906,8,104
 a 457,818,56,40 a 519,818,58,40 k 580,820,60,40 k 640,828,20,20 b 397,858,45,22 b 397,892,33,14 c 394,910,34,20 b 397,976,32,14 c 451,892,20,44 k 396,936,26,34 a 413,1008,32,16 c 443,940,20,46 g 486,866,32,12 g 520,866,32,14 m 486,884,112,98 b 607,866,18,34 g 637,858,18,42 a 625,904,46,22 a 620,933,50,60 d 646,982 a 612,1000,42,22 k 470,924,18,56 k 456,990,120,36 b 572,990,34,16 k 658,990,14,28 c 394,1032,18,34 g 391,1066,20,44 m 421,1032,36,54 d 439,1060 a 473,1032,50,64 d 500,1084 a 529,1032,40,58 k 574,1032,10,18 a 421,1096,38,16 d 454,1103 a 354,1090,28,14 d 362,1100 b 196,1064,14,34 c 216,1066,16,34 b 263,1066,16,30 c 298,1066,16,30 k 238,1066,24,30 k 282,1064,14,34 k 318,1066,66,16 k 326,1086,24,14 Y 183,1066,5,5 Y 183,1080,5,5
 a 727,906,34,28 a 727,955,34,24 a 727,1001,34,26 g 727,1048,34,26 k 726,560,52,84 i 738,570,28,34 c 763,620,14,26`};
const lines=[
 'A 448,600 448,440 460,430 583,430 585,427 795,427 B 110,427 126,410 126,325 140,311 190,311 200,301 233,301 233,510 242,520 D 242,115 30,292 30,322 -7,382 C 788,382 715,382 670,371 475,371 357,333 357,85 370,71 435,71 448,57 448,0',
 'B 472,265 472,295 455,313 262,313 254,322 254,505 266,515 D 266,125 158,222 158,376 166,376','B 527,257 592,257 605,270 605,292 618,302',
 'B 653,310 668,311 680,322 680,405 716,438 D 716,103 658,160 658,320','D 360,88 628,88','D 205,420 222,436 568,436 584,420 584,373 592,366',
 'E 98,188 110,176 248,176 263,190 263,240 275,252 290,254 305,270 305,297 318,311 577,311 590,323 590,418 575,433 125,433 113,420 113,368 98,352 98,188',
 'E 43,950 55,938 100,938 145,884 352,884 365,896 365,1068 350,1083 215,1083 175,1042 58,1042 43,1028 43,950',
 'E 810,296 720,296 710,305 710,865 692,883 400,883 389,893 389,1112 402,1126 738,1126 752,1113 752,1075 778,1049 810,1049 F 22,1049 50,1075 50,1108 62,1120 350,1120 355,1126 500,1126 508,1120 575,1120 590,1105 590,1068 615,1042 670,1042 686,1028 686,855 660,803 472,803 458,788 458,540 440,526 420,526 402,505 402,452 338,377 185,377 92,296 15,296',
 'F 122,145 135,133 230,133 250,113 385,113 402,128 402,163 358,230 358,340 345,352 190,352 179,340 179,230 155,208 137,208 122,193 122,145',
 'F 677,215 692,203 765,203 779,217 779,418 765,430 692,430 677,418 677,215'];
const outlines=[
 'A 22,195 30,160 42,132 60,125 90,125 92,145 98,155 110,160 122,154 129,143 130,123 165,116 200,98 268,34 363,34 370,22 445,22 450,28 710,28 718,38 718,268 728,277 795,277 B 108,277 122,295 205,295 215,284 352,284 364,295 442,295 452,284 452,255 472,233 472,170 452,150 452,77 490,40 560,36 630,41 690,55 742,88 775,130 790,170 797,215 797,275 787,283 787,345 795,355 D 795,490 780,497 770,507 770,548 750,568 635,568 590,577 0,577 C 305,577 297,569 42,569 28,555 28,408 24,405 24,232 22,230',
 'E 17,205 25,160 45,120 72,90 130,55 190,41 240,37 303,38 325,42 361,77 361,152 340,173 340,233 361,255 361,284 372,295 450,295 460,284 600,284 610,295 690,295 705,277 810,277 F 85,277 95,265 95,38 103,28 362,28 368,22 443,22 450,34 545,34 612,98 648,116 684,123 685,145 692,155 703,160 716,154 722,143 722,127 755,124 770,132 785,175 790,210 791,800 786,803 786,975 783,980 783,1125 770,1138 515,1138 505,1147 50,1147 E 220,1147 190,1138 63,1138 44,1118 44,1072 36,1067 17,1061 17,355 25,348 25,283 17,273'];
let svg=outlines.map(o=>`<polygon points="${path(o)}" fill="${GREEN}" stroke="#4d9b74" stroke-width="1" shape-rendering="auto"/>`).join('');
for(const s in parts){svg+=`<g transform="translate(${SHEET[s]}) scale(.333333)">`;
 const t=parts[s].trim().split(/\s+/);for(let i=0;i<t.length;i+=2)svg+=draw[t[i]](...t[i+1].split(',').map(Number));svg+='</g>'}
svg+=lines.map(l=>`<polyline points="${path(l)}" stroke="${W}" stroke-width="3" fill="none"/>`).join('');
svg+=`<g fill="none" stroke="${W}" stroke-width="2.500" shape-rendering="auto"><circle cx="1284.700" cy="385" r="9"/><circle cx="1241" cy="664" r="9"/><path d="M1471.500 567a9.500 9.500 0 1 0 13.500 15M1443.500 667a10 10 0 1 1 19-6M1015 668a10 10 0 0 0 20-6"/></g>`;
for(const [x,y,o] of [[703,267,.7],[1153,267,.7],[703,668,.35],[1153,668,.35]])
 svg+=`<text x="${x}" y="${y+6}" transform="rotate(-45 ${x} ${y})" text-anchor="middle" font-family="Open Sans" font-size="17" fill="#aaa590" opacity="${o}">XZZ@XZZHK</text>`;
document.getElementById('board').innerHTML=svg;
</script>
</body>
</html>
